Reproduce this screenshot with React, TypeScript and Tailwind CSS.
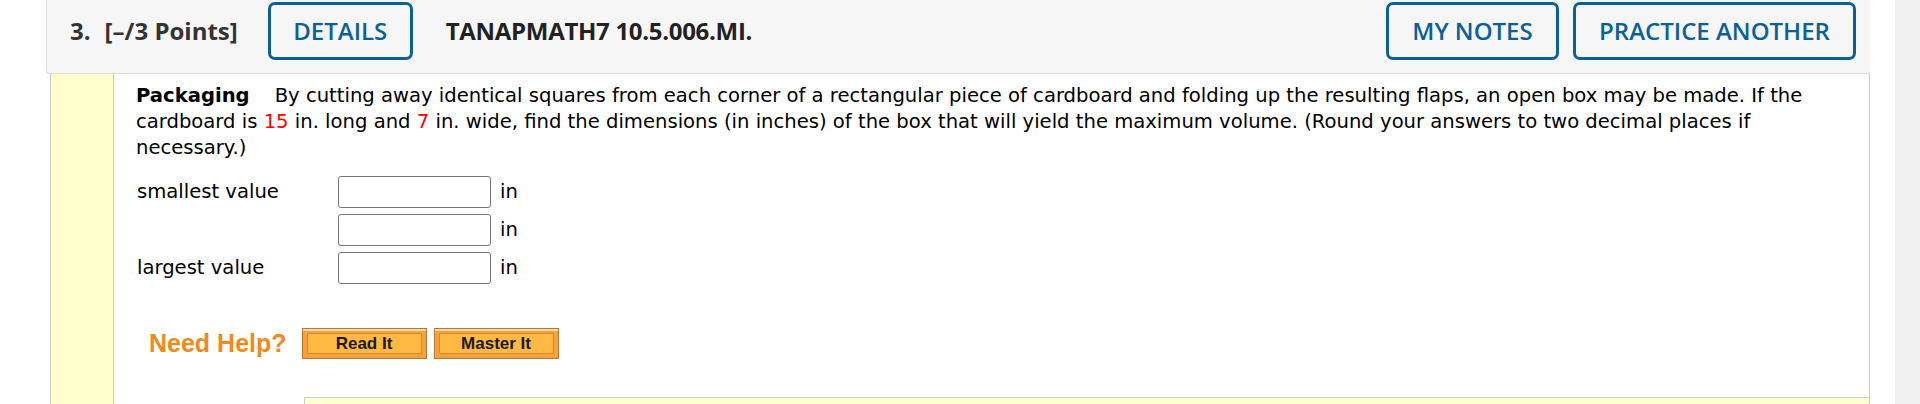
export default function App() {
  const rows = [
    { label: 'smallest value' },
    { label: '' },
    { label: 'largest value' },
  ]

  return (
    <div className="w-[1920px] h-[404px] flex overflow-hidden bg-white">
      <div className="flex-1 pl-[46px] pr-[25px] flex flex-col">
        {/* question header */}
        <div className="h-[74px] shrink-0 bg-[#f6f6f6] border-l border-b border-[#dddddd] rounded-bl-[3px] flex items-start pl-[23px] pr-[14px] font-['Open_Sans',sans-serif]">
          <div className="h-[58px] mt-[2px] w-full flex items-center">
            <span className="text-[24px] font-bold text-[#333333]">3.</span>
            <span className="ml-[14px] text-[24px] font-bold text-[#333333]">
              [–/3 Points]
            </span>
            <button className="ml-[30px] h-[58px] w-[145px] border-[3px] border-[#0a6199] rounded-[7px] text-[24px] font-semibold text-[#0a6199]">
              DETAILS
            </button>
            <span className="ml-[33px] text-[24px] font-bold tracking-[-0.3px] text-[#222222]">
              TANAPMATH7 10.5.006.MI.
            </span>
            <div className="ml-auto flex gap-[14px]">
              <button className="h-[58px] w-[173px] border-[3px] border-[#0a6199] rounded-[7px] text-[24px] font-semibold text-[#0a6199]">
                MY NOTES
              </button>
              <button className="h-[58px] w-[283px] border-[3px] border-[#0a6199] rounded-[7px] text-[24px] font-semibold text-[#0a6199]">
                PRACTICE ANOTHER
              </button>
            </div>
          </div>
        </div>

        {/* question body */}
        <div className="ml-[4px] flex flex-1 border-l border-[#cccccc]">
          <div className="w-[63px] shrink-0 bg-[#ffffcc] border-r border-[#cccccc]" />
          <div className="flex-1 border-r border-[#cccccc] flex flex-col font-['DejaVu_Sans',Verdana,sans-serif] text-[19.6px] text-black">
            <div className="pl-[22px] pr-[30px] pt-[9px]">
              <p className="leading-[26px]">
                <span className="font-bold">Packaging</span>
                <span className="ml-[25px]">
                  By cutting away identical squares from each corner of a rectangular piece of cardboard and folding up the resulting flaps, an open box may be made. If the cardboard is{' '}
                  <span className="text-[#ff0000]">15</span> in. long and{' '}
                  <span className="text-[#ff0000]">7</span> in. wide, find the dimensions (in inches) of the box that will yield the maximum volume. (Round your answers to two decimal places if necessary.)
                </span>
              </p>

              <div className="mt-[15px] flex flex-col gap-[6px]">
                {rows.map((r, i) => (
                  <div key={i} className="h-[32px] flex items-center">
                    <span className="w-[202px] pl-[1px]">{r.label}</span>
                    <input
                      type="text"
                      className="w-[153px] h-[32px] border border-[#767676] rounded-[3px] bg-white"
                    />
                    <span className="ml-[9px]">in</span>
                  </div>
                ))}
              </div>

              <div className="mt-[44px] flex items-center h-[31px] pl-[13px]">
                <span className="font-['Liberation_Sans',Arial,sans-serif] font-bold text-[25px] text-[#f08a1c]">
                  Need Help?
                </span>
                <div className="ml-[15px] flex gap-[7px]">
                  {['Read It', 'Master It'].map((b) => (
                    <div
                      key={b}
                      className="w-[125px] h-[31px] bg-[#f4a23c] border border-[#b9772e] p-[4px] shadow-[inset_0_2px_0_#fcd9ab]"
                    >
                      <div className="h-full border border-[#d88a33] bg-[#fdb944] flex items-center justify-center font-['Liberation_Sans',Arial,sans-serif] font-bold text-[17px] text-[#1a1a1a] leading-none">
                        {b}
                      </div>
                    </div>
                  ))}
                </div>
              </div>
            </div>

            <div className="ml-[190px] mt-[38px] flex-1 bg-[#ffffd2] border-t border-l border-[#cccccc]" />
          </div>
        </div>
      </div>
      <div className="w-[25px] shrink-0 bg-[#f0f0f0]" />
    </div>
  )
}
